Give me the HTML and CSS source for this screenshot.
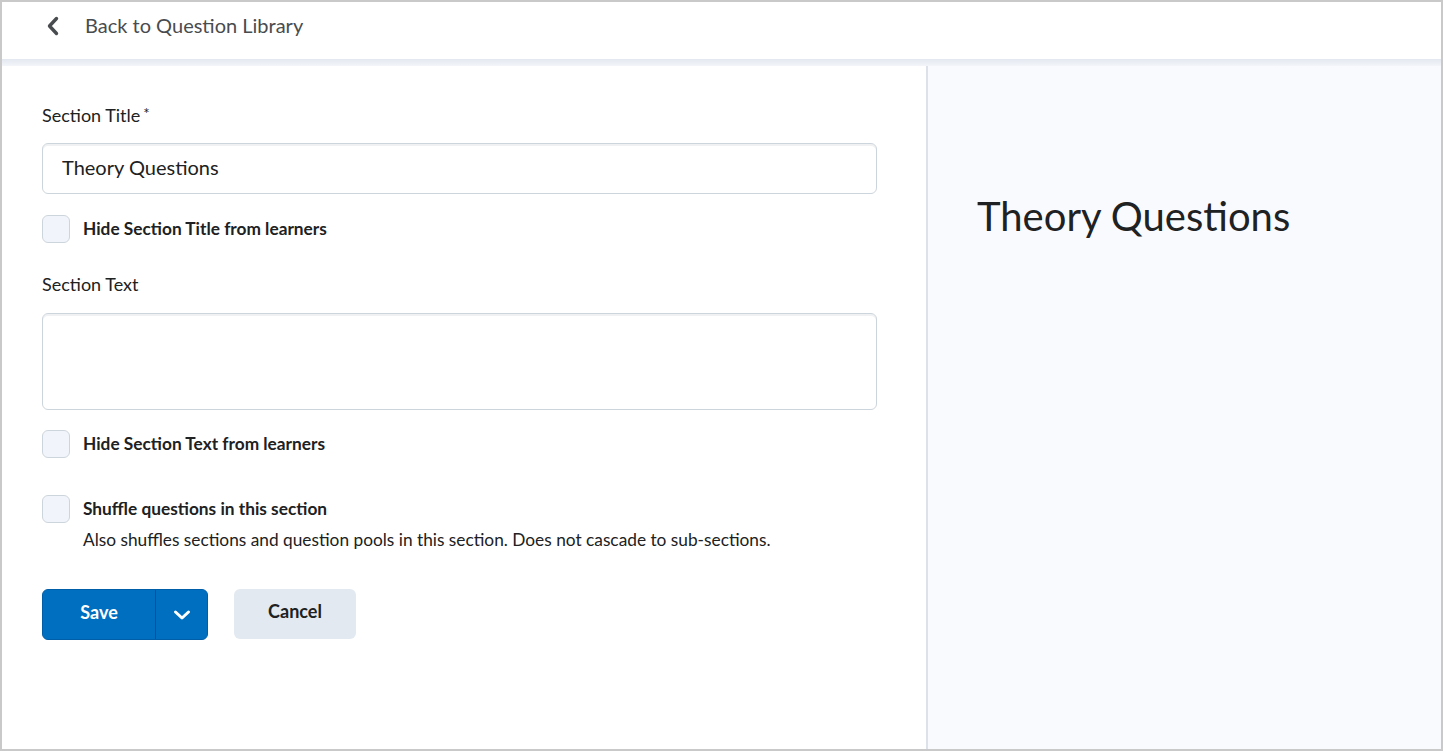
FILE: index.html
```html
<!DOCTYPE html>
<html lang="en">
<head>
<meta charset="utf-8">
<title>Section</title>
<link rel="stylesheet" href="styles.css">
</head>
<body>
<div class="frame">
  <header class="topbar">
    <a class="back" href="#">
      <svg class="back-icon" width="14" height="20" viewBox="0 0 14 20" aria-hidden="true">
        <path d="M10.5 2.5 L3.5 10 L10.5 17.5" fill="none" stroke="#494c4e" stroke-width="3.4" stroke-linecap="round" stroke-linejoin="round"/>
      </svg>
      <span>Back to Question Library</span>
    </a>
  </header>
  <div class="shadow"></div>
  <div class="main">
    <form class="form">
      <label class="field-label" for="title">Section Title<span class="req">*</span></label>
      <input id="title" class="text-input" type="text" value="Theory Questions">

      <div class="check-row gap-a">
        <span class="checkbox"></span>
        <div class="check-text"><span class="check-label">Hide Section Title from learners</span></div>
      </div>

      <div class="field-label gap-b">Section Text</div>
      <div class="textarea"></div>

      <div class="check-row gap-c">
        <span class="checkbox"></span>
        <div class="check-text"><span class="check-label">Hide Section Text from learners</span></div>
      </div>

      <div class="check-row gap-d">
        <span class="checkbox"></span>
        <div class="check-text">
          <span class="check-label">Shuffle questions in this section</span>
          <span class="check-desc">Also shuffles sections and question pools in this section. Does not cascade to sub-sections.</span>
        </div>
      </div>

      <div class="buttons">
        <div class="split">
          <button type="button" class="btn-save">Save</button>
          <button type="button" class="btn-more" aria-label="More options">
            <svg width="18" height="12" viewBox="0 0 18 12" aria-hidden="true">
              <path d="M2.5 3 L9 9 L15.5 3" fill="none" stroke="#ffffff" stroke-width="3" stroke-linecap="round" stroke-linejoin="round"/>
            </svg>
          </button>
        </div>
        <button type="button" class="btn-cancel">Cancel</button>
      </div>
    </form>
    <aside class="preview">
      <h1 class="preview-title">Theory Questions</h1>
    </aside>
  </div>
</div>
</body>
</html>
```

FILE: styles.css
```css
* { box-sizing: border-box; }
html, body { margin: 0; padding: 0; }
body {
  font-family: Lato, "Open Sans", sans-serif;
  color: #202122;
  background: #ffffff;
}
.frame {
  width: 1443px;
  height: 751px;
  border: 2px solid #c9c9c9;
  display: flex;
  flex-direction: column;
  overflow: hidden;
}
.topbar {
  height: 57px;
  flex: none;
  display: flex;
  align-items: center;
  padding: 0 0 9px 44px;
  background: #ffffff;
}
.back {
  display: flex;
  align-items: center;
  text-decoration: none;
  color: #494c4e;
  font-size: 20px;
}
.back-icon { margin-right: 25px; }
.back span { position: relative; top: -1px; }
.shadow {
  height: 7px;
  flex: none;
  background: linear-gradient(#e3e8f0, #f3f5f9);
}
.main {
  flex: 1;
  display: flex;
  min-height: 0;
}
.form {
  width: 924px;
  flex: none;
  padding: 38px 49px 0 40px;
  display: flex;
  flex-direction: column;
  align-items: flex-start;
}
.field-label {
  display: block;
  font-size: 18px;
  line-height: 22px;
  color: #202122;
}
.req { margin-left: 3px; font-size: 15px; position: relative; top: -3px; }
.text-input {
  margin-top: 16px;
  width: 835px;
  height: 51px;
  border: 1px solid #cdd5dc;
  border-radius: 6px;
  padding: 0 19px 4px;
  font-family: Lato, sans-serif;
  font-size: 20px;
  color: #202122;
  background: #fff;
  box-shadow: inset 0 2px 0 0 rgba(177,185,190,0.2);
}
.textarea {
  margin-top: 18px;
  width: 835px;
  height: 97px;
  border: 1px solid #cdd5dc;
  border-radius: 6px;
  background: #fff;
  box-shadow: inset 0 2px 0 0 rgba(177,185,190,0.2);
}
.check-row {
  display: flex;
  align-items: flex-start;
}
.gap-a { margin-top: 21px; }
.gap-b { margin-top: 30px; }
.gap-c { margin-top: 20px; }
.gap-d { margin-top: 37px; }
.checkbox {
  width: 28px;
  height: 28px;
  flex: none;
  border: 1px solid #cdd5dc;
  border-radius: 6px;
  background: #f1f5fb;
}
.check-text {
  margin-left: 13px;
  display: flex;
  flex-direction: column;
}
.check-label {
  font-size: 17.3px;
  font-weight: 700;
  line-height: 28px;
  color: #202122;
}
.check-desc {
  margin-top: 5px;
  font-size: 17.3px;
  line-height: 24px;
  color: #202122;
}
.buttons {
  margin-top: 37px;
  display: flex;
  gap: 26px;
}
.split {
  display: flex;
  height: 51px;
  border-radius: 6px;
  overflow: hidden;
  border: 1px solid #005ea8;
  background: #006fbf;
}
.btn-save, .btn-more, .btn-cancel {
  font-family: Lato, sans-serif;
  font-weight: 700;
  font-size: 18px;
  border: none;
  cursor: pointer;
}
.btn-save {
  width: 112px;
  background: #006fbf;
  color: #ffffff;
  padding: 0 0 6px;
}
.btn-more {
  width: 52px;
  background: #006fbf;
  border-left: 1px solid #0a4f8a;
  display: flex;
  align-items: center;
  justify-content: center;
  padding-top: 1px;
}
.btn-cancel {
  width: 122px;
  height: 50px;
  border-radius: 6px;
  background: #e3e9f1;
  color: #202122;
  padding: 0 0 6px;
}
.preview {
  flex: 1;
  border-left: 2px solid #dde2ea;
  background: #f9fafd;
  padding: 126px 0 0 49px;
}
.preview-title {
  margin: 0;
  font-size: 40px;
  font-weight: 400;
  line-height: 48px;
  color: #202122;
}
```
